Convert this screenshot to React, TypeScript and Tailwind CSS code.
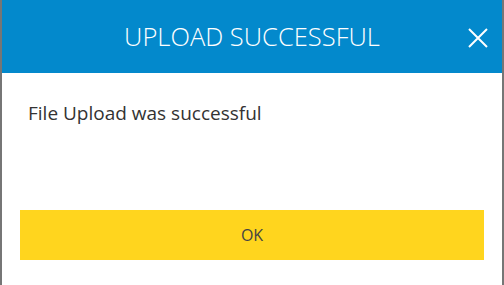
import React from "react";

const CloseIcon = () => (
  <svg width="20" height="20" viewBox="0 0 20 20" fill="none" stroke="white" strokeWidth="2">
    <path d="M1 1 L19 19 M19 1 L1 19" />
  </svg>
);

export default function App() {
  return (
    <div
      className="w-[504px] h-[285px] bg-white border-x-2 border-[#767676] flex flex-col"
      style={{ fontFamily: '"Open Sans", sans-serif' }}
    >
      <div className="h-[73px] bg-[#0389cc] flex items-center relative shrink-0">
        <h1 className="w-full text-center text-white text-[25.5px] font-light">
          UPLOAD SUCCESSFUL
        </h1>
        <button className="absolute right-[14px] top-[28px]">
          <CloseIcon />
        </button>
      </div>
      <div className="flex-1 flex flex-col px-[18px]">
        <p className="pl-[8px] pt-[27px] text-[19px] text-[#333] leading-[26px]">
          File Upload was successful
        </p>
        <button className="mt-[84px] h-[50px] w-full bg-[#ffd51e] text-[16px] text-[#444]">
          OK
        </button>
      </div>
    </div>
  );
}
